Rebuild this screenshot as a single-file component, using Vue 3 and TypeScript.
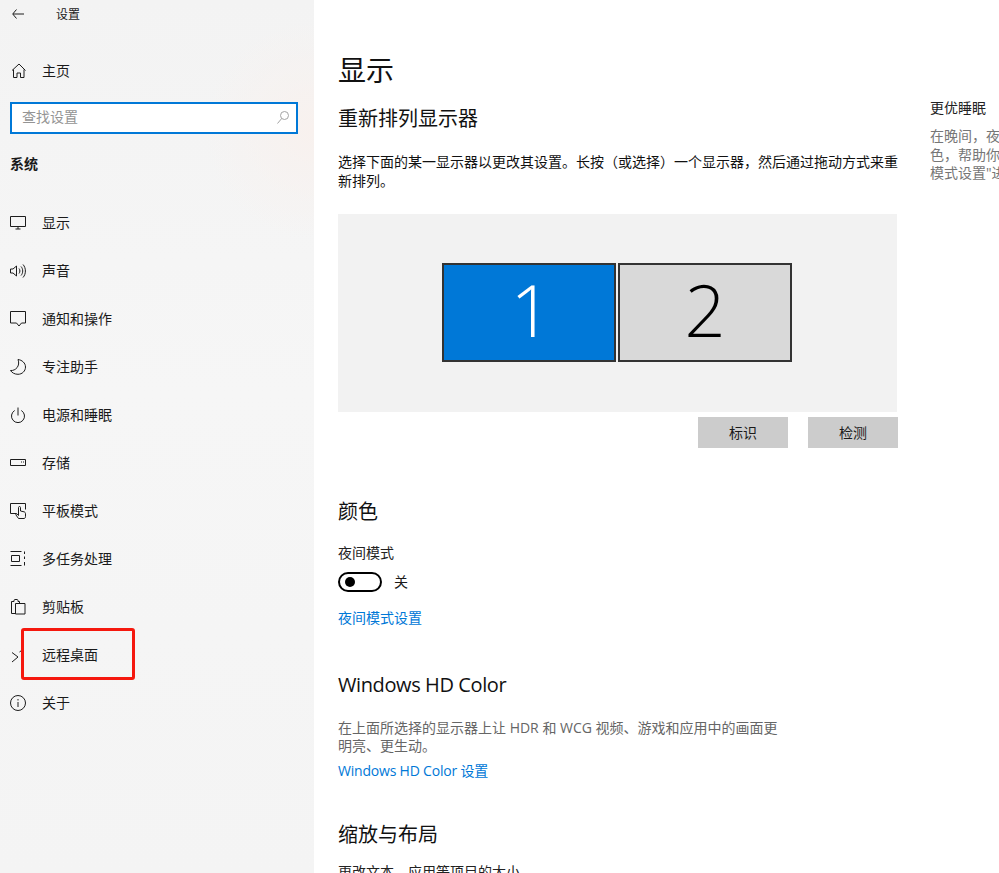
<script setup lang="ts">
const navItems: { label: string; icon: string }[] = [
  { label: '显示', icon: 'display' },
  { label: '声音', icon: 'sound' },
  { label: '通知和操作', icon: 'notify' },
  { label: '专注助手', icon: 'moon' },
  { label: '电源和睡眠', icon: 'power' },
  { label: '存储', icon: 'storage' },
  { label: '平板模式', icon: 'tablet' },
  { label: '多任务处理', icon: 'multi' },
  { label: '剪贴板', icon: 'clip' },
  { label: '远程桌面', icon: 'remote' },
  { label: '关于', icon: 'info' },
]
const paths: Record<string, string> = {
  display: 'M.5 1.500h15v10H.5zM8 11.500v2.500M5.500 14h5',
  sound: 'M.5 6v4h2.500l3.500 3V3L3 6zM9 5.500c1.200 1.400 1.200 3.600 0 5M11 3.500c2.300 2.500 2.300 6.500 0 9M13 1.500c3.200 3.500 3.200 9.500 0 13',
  notify: 'M.5 .5h15v11.500h-4l-2.500 3-2.500-3H.5z',
  moon: 'M8 .5C12 1 15.500 4 15.500 8c0 4-3.300 7.300-7.500 7.300-3.300 0-6.200-1.600-7.500-3.800 5 .5 10-4.500 7.500-11z',
  power: 'M8 .5v8M4.700 3.500a6.500 6.500 0 1 0 6.600 0',
  storage: 'M.5 4.500h15v6H.5zM11 7h1M13 7h1',
  tablet: 'M6.500 10.500H.5v-10h15v6M8.500 15.500L6 12c-.6-.9.5-1.700 1.200-1l1.300 1.500V4.500c0-1.300 2-1.300 2 0V8l3.500.8c1 .2 1.500 1 1.500 2v2.700c0 1-.5 2-1.500 2z',
  multi: 'M.5 .5h11M.5 14.500h11M1.500 4.500h8v6h-8zM14.500 .5v2.500M14.500 5.500v2.500M14.500 11v3.500',
  clip: 'M5.500 14.500h-4V2.500H4V1.500c0-.6.5-1 1-1h2c.5 0 1 .4 1 1v1h1.500v2M5.500 4.500h9.500v10.500H5.500z',
  remote: 'M2 5.500l6 4.500-6 5M9.500 5l2-1.500',
  info: 'M8 .5a7.500 7.500 0 1 1 0 15 7.500 7.500 0 0 1 0-15zM8 7v5M8 4v1.500',
}
</script>

<template>
  <div class="page">
    <aside class="sidebar">
      <header class="top">
        <svg class="back" width="12" height="10" viewBox="0 0 12 10"><path d="M4.500 .5L.7 5l3.800 4.500M1 5h11" /></svg>
        <span class="app-title">设置</span>
      </header>
      <div class="home row">
        <svg class="ic" width="16" height="16" viewBox="0 0 16 16"><path d="M2 7.500L9 1l6.500 6.500M3.500 6.500v8H7V10h3.500v4.500H14v-8" /></svg>
        <span>主页</span>
      </div>
      <div class="search">
        <span class="ph">查找设置</span>
        <svg width="12" height="13" viewBox="0 0 12 13"><path d="M7.500 .5a4 4 0 1 1 0 8 4 4 0 0 1 0-8zM4.700 7.500L.5 12.500" /></svg>
      </div>
      <div class="group">系统</div>
      <nav class="nav">
        <div v-for="item in navItems" :key="item.label" class="row">
          <svg class="ic" width="16" height="16" viewBox="0 0 16 16"><path :d="paths[item.icon]" /></svg>
          <span>{{ item.label }}</span>
        </div>
      </nav>
      <div class="marker"></div>
    </aside>

    <main class="main">
      <section class="content">
        <h1>显示</h1>
        <h2 class="h-first">重新排列显示器</h2>
        <p class="desc">选择下面的某一显示器以更改其设置。长按（或选择）一个显示器，然后通过拖动方式来重新排列。</p>
        <div class="stage">
          <div class="monitor active">1</div>
          <div class="monitor">2</div>
        </div>
        <div class="btns">
          <button type="button">标识</button>
          <button type="button">检测</button>
        </div>

        <h2 class="h-color">颜色</h2>
        <div class="label">夜间模式</div>
        <div class="toggle-row">
          <span class="toggle"><i></i></span>
          <span>关</span>
        </div>
        <a class="link night">夜间模式设置</a>

        <h2 class="h-hd">Windows HD Color</h2>
        <p class="gray">在上面所选择的显示器上让 HDR 和 WCG 视频、游戏和应用中的画面更明亮、更生动。</p>
        <a class="link hd">Windows HD Color 设置</a>

        <h2 class="h-scale">缩放与布局</h2>
        <div class="label cut">更改文本、应用等项目的大小</div>
      </section>
      <aside class="side">
        <div class="side-title">更优睡眠</div>
        <p>在晚间，夜间模式会显示暖色</p>
        <p>色，帮助你入睡。选择夜间模式</p>
        <p>模式设置"进行设置。</p>
      </aside>
    </main>
  </div>
</template>

<style>
html, body { margin: 0; background: #fff; overflow: hidden; }
</style>

<style scoped>
.page {
  display: flex;
  width: 999px;
  height: 873px;
  overflow: hidden;
  background: #fff;
  color: #1a1a1a;
  font: 14px/20px "Open Sans", "Noto Sans CJK SC", sans-serif;
}
.sidebar {
  position: relative;
  flex: 0 0 314px;
  padding: 0 16px 0 10px;
  box-sizing: border-box;
  background:
    radial-gradient(circle at 100% 130px, #f8f1ee 0, rgba(248, 241, 238, 0) 110px),
    linear-gradient(180deg, #f3f3f3 0, #f6f6f6 45%, #f4f4f4 100%);
}
.top { display: flex; align-items: center; height: 28px; }
.back { margin-left: 2px; }
.back path, .ic path { fill: none; stroke: #1c1c1c; stroke-width: 1; }
.app-title { margin-left: 32px; margin-top: 2px; font-size: 12px; }
.row { display: flex; align-items: center; gap: 16px; height: 48px; }
.ic { flex: none; }
.home { margin-top: 19px; }
.search {
  display: flex;
  align-items: center;
  justify-content: space-between;
  box-sizing: border-box;
  height: 32px;
  margin-top: 7px;
  padding: 0 7px 2px 10px;
  border: 2px solid #0078d7;
  background: #fff;
}
.search path { fill: none; stroke: #a3a3a3; stroke-width: 1; }
.ph { color: #949494; }
.group { margin-top: 20px; font-weight: 700; }
.nav { margin-top: 25px; }
.marker {
  position: absolute;
  left: 21px;
  top: 628px;
  width: 114px;
  height: 52px;
  box-sizing: border-box;
  border: 3px solid #f5180e;
  border-radius: 3px;
}
.main { display: flex; flex: 1; min-width: 0; padding: 50px 0 0 24px; }
.content { flex: 0 0 560px; width: 560px; }
h1, h2, p { margin: 0; font-weight: 400; }
h1 { font-size: 28px; line-height: 40px; color: #111; }
h2 { font-size: 20px; line-height: 28px; color: #111; }
.h-first { margin-top: 15px; }
.desc { margin-top: 19px; line-height: 19px; color: #111; }
.stage {
  display: flex;
  gap: 2px;
  width: 559px;
  height: 198px;
  margin-top: 24px;
  padding: 49px 0 0 104px;
  box-sizing: border-box;
  background: #f2f2f2;
}
.monitor {
  width: 174px;
  height: 99px;
  box-sizing: border-box;
  border: 2px solid #333;
  background: #d9d9d9;
  color: #000;
  font: 300 72px/88px "Open Sans", sans-serif;
  text-align: center;
}
.monitor.active { background: #0078d7; color: #fff; text-indent: 4px; }
.btns { display: flex; justify-content: flex-end; gap: 20px; margin-top: 5px; }
button {
  width: 90px;
  height: 31px;
  padding: 0;
  border: 0;
  background: #ccc;
  color: #1a1a1a;
  font: inherit;
}
.h-color { margin-top: 50px; }
.label { margin-top: 17px; color: #222; }
.toggle-row { display: flex; align-items: center; gap: 12px; height: 20px; margin-top: 9px; }
.toggle {
  display: flex;
  align-items: center;
  box-sizing: border-box;
  width: 44px;
  height: 20px;
  padding-left: 5px;
  border: 2px solid #000;
  border-radius: 10px;
}
.toggle i { width: 10px; height: 10px; border-radius: 50%; background: #000; }
.link { display: block; color: #0078d7; }
.night { margin-top: 16px; }
.h-hd { margin-top: 43px; letter-spacing: -.4px; }
.gray { margin-top: 20px; width: 442px; line-height: 18px; color: #666; }
.hd { margin-top: 6px; letter-spacing: -.2px; }
.h-scale { margin-top: 40px; }
.label.cut { margin-top: 13px; }
.side { flex: none; width: 300px; margin-left: 32px; padding-top: 48px; white-space: nowrap; }
.side-title { color: #222; }
.side p { color: #767676; line-height: 18.500px; }
.side-title + p { margin-top: 9px; }
</style>
